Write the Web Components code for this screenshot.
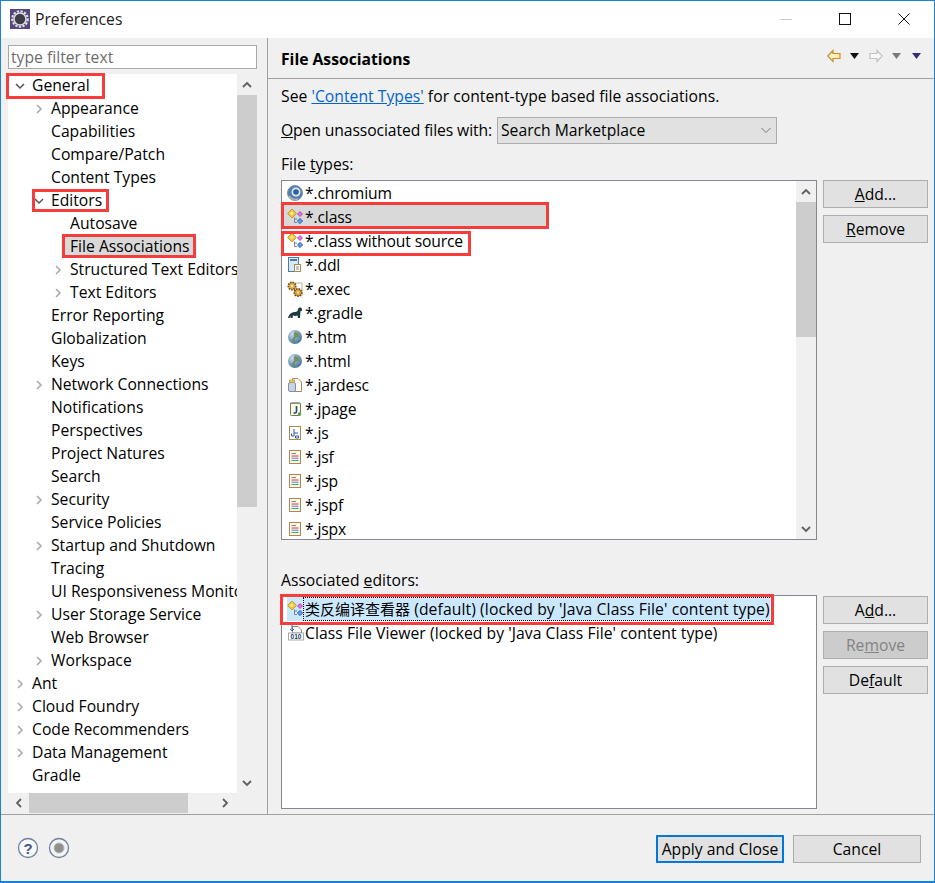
<!DOCTYPE html>
<html><head><meta charset="utf-8"><style>
html,body{margin:0;padding:0;background:#f0f0f0}
body{font:15.7px/20px "Open Sans","Noto Sans CJK SC",sans-serif;color:#000}
</style></head><body>
<pref-window></pref-window>
<script>
const ICONS={
 cls:`<svg viewBox="0 0 18 18" width="18" height="18"><path d="M.6 5.500 5 1.100 9.400 5.500 5 9.900Z" fill="#f4cb3c" stroke="#b58e28" stroke-width=".9"/><path d="M3 5.500 5 3.500 6.500 5 4.500 7Z" fill="#fdf0a8"/><path d="M10.500 6 13 3.500 15.500 6 13 8.500Z" fill="#e46ee4" stroke="#a23ea6" stroke-width=".8"/><path d="M10.300 13 13 10.300 15.700 13 13 15.700Z" fill="#5b9be6" stroke="#2c60a8" stroke-width=".8"/><path d="M7.500 9.500V14.500H10M7.500 11H10" fill="none" stroke="#76849c"/></svg>`,
 chromium:`<svg viewBox="1 0 18 18" width="18" height="18"><circle cx="9" cy="9" r="7.500" fill="#4f7fb5" stroke="#7f8fa8"/><circle cx="10" cy="8" r="4.500" fill="#dce8f5"/><circle cx="10" cy="8" r="2.800" fill="#2f5f9f"/><path d="M3 12a7 7 0 0 0 9 3" stroke="#a8b0b8" stroke-width="2" fill="none"/></svg>`,
 ddl:`<svg viewBox="1 0 18 18" width="18" height="18"><rect x="2.500" y="1.500" width="10" height="14" fill="#dbe8f5" stroke="#4a78a8"/><path d="M4 4H11" stroke="#4a78a8" stroke-width="2"/><rect x="8.500" y="8.500" width="6" height="7" fill="#fff" stroke="#a88a50"/><path d="M10 11H13M10 13H13" stroke="#888"/></svg>`,
 exec:`<svg viewBox="1 0 18 18" width="18" height="18"><rect x="9" y="3" width="7" height="12" fill="#fff" stroke="#b8b0a0"/><circle cx="6" cy="6" r="3.700" fill="#e8b048" stroke="#6a4a18" stroke-width="1.800" stroke-dasharray="1.500 1"/><circle cx="6" cy="6" r="1.100" fill="#fff"/><circle cx="12" cy="12.500" r="3.700" fill="#e8a030" stroke="#6a4a18" stroke-width="1.800" stroke-dasharray="1.500 1"/><circle cx="12" cy="12.500" r="1.100" fill="#fff"/></svg>`,
 gradle:`<svg viewBox="1 0 18 18" width="18" height="18"><path d="M2 14C3 10 6 8 9 8 11 8 12 7 12 5 13 3 15.500 3 16 5 16.500 6.500 15.500 7.500 14.500 7L14 14H12L11.500 11.500C10 12 8 12 7 11.500L6.500 14H4.500L4.500 12 3.500 14Z" fill="#1d3a40"/></svg>`,
 globe:`<svg viewBox="1 0 18 18" width="18" height="18"><defs><radialGradient id="g" cx=".35" cy=".3" r=".8"><stop offset="0" stop-color="#cfe0ee"/><stop offset=".6" stop-color="#6f97b8"/><stop offset="1" stop-color="#3f6a8f"/></radialGradient></defs><circle cx="9" cy="9" r="7" fill="url(#g)"/><path d="M9 3.500C11 5 13.500 6 13.500 8 12 10 10 9 9 10 8 12 10 14 8 15.500 6 13 6 10 8 9 8 7 7 6 9 3.500Z" fill="#6a8a4a" opacity=".85"/></svg>`,
 jar:`<svg viewBox="1 0 18 18" width="18" height="18"><path d="M6.500 2.500H12L15.500 6V15.500H6.500Z" fill="#fff" stroke="#a88a50"/><rect x="2.500" y="6.500" width="7" height="9" rx="1.500" fill="#c8d4e4" stroke="#8090a8"/><rect x="3.500" y="4" width="5" height="2.500" fill="#f0c860" stroke="#a88a50" stroke-width=".6"/></svg>`,
 jpage:`<svg viewBox="1 0 18 18" width="18" height="18"><rect x="4.500" y="3" width="10" height="12.500" rx="1" fill="#fdfbe8" stroke="#7a7a50"/><path d="M5 2.500V4M7 2.500V4M9 2.500V4M11 2.500V4M13 2.500V4" stroke="#666"/><path d="M10.500 6V11.500Q10.500 13 9 13H7.500" stroke="#1a4a78" stroke-width="1.600" fill="none"/><circle cx="13.500" cy="14" r="1.800" fill="#5aa050"/></svg>`,
 js:`<svg viewBox="1 0 18 18" width="18" height="18"><rect x="3.500" y="2.500" width="11" height="13" fill="#fff" stroke="#a88a50"/><path d="M8 5V12H5.500V9.500M8 9H12M9.500 12H12.500V14H9.500Z" stroke="#2c5a9c" fill="none"/></svg>`,
 jsp:`<svg viewBox="1 0 18 18" width="18" height="18"><rect x="3.500" y="2.500" width="11" height="13" fill="#fbf6e8" stroke="#a88a50"/><path d="M5.500 5.500H10" stroke="#888"/><path d="M5.500 8H12.500" stroke="#d04040"/><path d="M5.500 10.200H12.500" stroke="#4a8acb"/><path d="M5.500 12.500H12.500" stroke="#50a060"/></svg>`,
 bin:`<svg viewBox="0 0 18 18" width="18" height="18"><path d="M5.500 2.500H11L14.500 6V9H5.500Z" fill="#fff" stroke="#8a8a8a"/><path d="M5 1V6M3 5 5 7 7 5" fill="none" stroke="#2c6ab0"/><rect x="1.500" y="9" width="15" height="7" fill="#fff" stroke="#aaa"/><text x="9" y="15" font-family="Liberation Sans" font-size="6.500" font-weight="bold" text-anchor="middle" fill="#1a3a68">010</text></svg>`
};
const CHEV=(d,c='#606060',w=1.8)=>`<svg viewBox="0 0 10 10" width="10" height="10"><path d="${d}" fill="none" stroke="${c}" stroke-width="${w}"/></svg>`;
const D={r:'M3 1 7 5 3 9',l:'M7 1 3 5 7 9',u:'M1 7 5 3 9 7',d:'M1 3 5 7 9 3'};

customElements.define('scroll-btn',class extends HTMLElement{
 constructor(){super();const dir=this.getAttribute('dir')||'u';
  this.attachShadow({mode:'open'}).innerHTML=`<style>:host{display:flex;align-items:center;justify-content:center;flex:none;background:#f0f0f0}svg{display:block}</style>${CHEV(D[dir])}`}
});
customElements.define('v-scroll',class extends HTMLElement{
 constructor(){super();
  this.attachShadow({mode:'open'}).innerHTML=`<style>:host{display:flex;flex-direction:column;width:20px;flex:none;background:#f0f0f0;box-sizing:border-box}
  scroll-btn{height:21px}.t{background:#cdcdcd;flex:none;height:var(--thumb)}.s{flex:1}</style>
  <scroll-btn dir="u"></scroll-btn><div class="t"></div><div class="s"></div><scroll-btn dir="d"></scroll-btn>`}
});
customElements.define('tree-row',class extends HTMLElement{
 constructor(){super();
  const l=+this.getAttribute('level')||0,a=this.getAttribute('arrow'),sel=this.hasAttribute('sel');
  const arrow=a?(a=='d'?CHEV(D.d,'#555',1.5):CHEV(D.r,'#aaa',1.6)):'';
  this.attachShadow({mode:'open'}).innerHTML=`<style>:host{display:flex;align-items:center;box-sizing:border-box;height:23px;padding-bottom:2px;white-space:nowrap;padding-left:${7+19*l}px;flex:none}
  .a{width:10px;height:10px;display:flex;flex:none;margin:2px 7px 0 0}
  .x{line-height:22px;${sel?'background:#d9d9d9;margin:0 0 0 -5px;padding:0 3px 0 5px;':''}}</style>
  <span class="a">${arrow}</span><span class="x"><slot></slot></span>`}
});
customElements.define('tree-pane',class extends HTMLElement{
 constructor(){super();
  this.attachShadow({mode:'open'}).innerHTML=`<style>:host{display:grid;grid-template-columns:229px 20px;grid-template-rows:1fr 20px;height:739px;margin-top:5px}
  .v{overflow:hidden;background:#fff;display:flex;flex-direction:column}
  v-scroll{--thumb:412px}
  .h{display:flex;background:#f0f0f0;grid-column:1}.h scroll-btn{width:21px}.h i{display:block;width:159px;background:#cdcdcd}.h b{flex:1}
  .h scroll-btn:last-child{width:24px}
  .c{background:#f0f0f0}</style>
  <div class="v"><slot></slot></div><v-scroll></v-scroll>
  <div class="h"><scroll-btn dir="l"></scroll-btn><i></i><b></b><scroll-btn dir="r"></scroll-btn></div><div class="c"></div>`}
});
customElements.define('eb-button',class extends HTMLElement{
 constructor(){super();
  const c=this.hasAttribute('def'),dis=this.hasAttribute('disabled');
  this.attachShadow({mode:'open'}).innerHTML=`<style>:host{display:flex;align-items:center;justify-content:center;box-sizing:border-box;height:28px;flex:none;
  background:${dis?'#cccccc':'#e1e1e1'};border:${c?'2px solid #0078d7':'1px solid #adadad'};color:${dis?'#838383':'#000'};white-space:nowrap}</style><slot></slot>`}
});
customElements.define('list-row',class extends HTMLElement{
 constructor(){super();
  const ic=this.getAttribute('icon'),sel=this.hasAttribute('sel'),focus=this.hasAttribute('focus');
  this.attachShadow({mode:'open'}).innerHTML=`<style>:host{display:flex;align-items:center;height:24px;flex:none;white-space:nowrap;padding-left:5px;box-sizing:border-box;${sel?'background:linear-gradient(#d9d9d9,#d9d9d9) no-repeat 0 0/267px 100%;':''}${focus?'background:linear-gradient(#cce8ff,#cce8ff) no-repeat 5px 0/483px 100%;':''}}
  svg{flex:none;display:block}.x{${focus?'outline:1px dotted #000;outline-offset:1px;':''}}</style>${ICONS[ic]}<span class="x"><slot></slot></span>`}
});
customElements.define('list-box',class extends HTMLElement{
 constructor(){super();
  this.attachShadow({mode:'open'}).innerHTML=`<style>:host{display:flex;box-sizing:border-box;border:1px solid #828790;background:#fff;overflow:hidden}
  .r{flex:1;min-width:0;display:flex;flex-direction:column;overflow:hidden}</style><div class="r"><slot></slot></div><slot name="bar"></slot>`}
});
customElements.define('tool-bar',class extends HTMLElement{
 constructor(){super();
  const tri=c=>`<svg width="9" height="6" viewBox="0 0 9 6"><path d="M0 0H9L4.500 6Z" fill="${c}"/></svg>`;
  this.attachShadow({mode:'open'}).innerHTML=`<style>:host{display:flex;align-items:center;margin-bottom:5px}svg{display:block}</style>
  <svg width="14" height="14" viewBox="0 0 14 14" style="margin-right:9px"><defs><linearGradient id="a" x1="0" x2="1"><stop offset="0" stop-color="#fffbe0"/><stop offset="1" stop-color="#fde9a0"/></linearGradient></defs><path d="M.8 7 6 1.500V4.500H13V9.500H6V12.500Z" fill="url(#a)" stroke="#c8902c" stroke-width="1.200"/></svg>${tri('#111')}
  <svg width="14" height="14" viewBox="0 0 14 14" style="margin:0 9px 0 10px"><path d="M13.200 7 8 1.500V4.500H1V9.500H8V12.500Z" fill="#f8f8f8" stroke="#c4c4c4" stroke-width="1.200"/></svg>${tri('#7a7a7a')}
  <span style="width:11px"></span>${tri('#3c2a78')}`}
});
customElements.define('title-bar',class extends HTMLElement{
 constructor(){super();
  this.attachShadow({mode:'open'}).innerHTML=`<style>:host{display:flex;align-items:center;height:37px;box-sizing:border-box;padding:0 1px 1px 9px;background:#fff;flex:none}
  .n{margin-left:5px;color:#222;flex:1}
  .b{display:flex}.b span{width:59px;display:flex;align-items:center;justify-content:center}svg{display:block}</style>
  <svg width="20" height="20" viewBox="0 0 20 20"><rect width="20" height="20" fill="#54467f"/><circle cx="10" cy="10" r="7.800" fill="none" stroke="#e4e4e4" stroke-width="2" stroke-dasharray="2.300 1.400"/><circle cx="10" cy="10" r="6" fill="#3c3c48" stroke="#dcdcdc" stroke-width="1.600"/></svg>
  <span class="n"><slot></slot></span>
  <div class="b"><span><svg width="12" height="12" viewBox="0 0 12 12"><path d="M0 6.500H12" stroke="#ccc"/></svg></span>
  <span><svg width="12" height="12" viewBox="0 0 12 12"><rect x=".5" y=".5" width="11" height="11" fill="none" stroke="#111"/></svg></span>
  <span><svg width="12" height="12" viewBox="0 0 12 12"><path d="M.5 .5 11.500 11.500M11.500 .5 .5 11.500" stroke="#111"/></svg></span></div>`}
});
customElements.define('red-mark',class extends HTMLElement{
 constructor(){super();
  const [x,y,w,h]=this.getAttribute('box').split(',');
  this.attachShadow({mode:'open'}).innerHTML=`<style>:host{position:absolute;left:${x}px;top:${y}px;width:${w}px;height:${h}px;box-sizing:border-box;border:3px solid #f73c3c;pointer-events:none}</style>`}
});

const tree=[['General',0,'d'],['Appearance',1,'r'],['Capabilities',1],['Compare/Patch',1],['Content Types',1],['Editors',1,'d'],['Autosave',2],['File Associations',2,'',1],['Structured Text Editors',2,'r'],['Text Editors',2,'r'],['Error Reporting',1],['Globalization',1],['Keys',1],['Network Connections',1,'r'],['Notifications',1],['Perspectives',1],['Project Natures',1],['Search',1],['Security',1,'r'],['Service Policies',1],['Startup and Shutdown',1,'r'],['Tracing',1],['UI Responsiveness Monitoring',1],['User Storage Service',1,'r'],['Web Browser',1],['Workspace',1,'r'],['Ant',0,'r'],['Cloud Foundry',0,'r'],['Code Recommenders',0,'r'],['Data Management',0,'r'],['Gradle',0],['Help',0,'r']];
const treeH=tree.map(([t,l,a,s])=>`<tree-row level="${l}" ${a?`arrow="${a}"`:''} ${s?'sel':''} ${t=='Help'?'style="margin-top:1px"':''}>${t}</tree-row>`).join('');
const files=[['chromium','*.chromium'],['cls','*.class',1],['cls','*.class without source'],['ddl','*.ddl'],['exec','*.exec'],['gradle','*.gradle'],['globe','*.htm'],['globe','*.html'],['jar','*.jardesc'],['jpage','*.jpage'],['js','*.js'],['jsp','*.jsf'],['jsp','*.jsp'],['jsp','*.jspf'],['jsp','*.jspx']];
const filesH=files.map(([i,t,s])=>`<list-row icon="${i}" ${s?'sel':''} style="letter-spacing:-.15px">${t}</list-row>`).join('');
const helpI=`<svg width="22" height="22" viewBox="0 0 22 22"><circle cx="11" cy="11" r="9.500" fill="#f8f9fb" stroke="#6f7f9f" stroke-width="1.300"/><text x="11" y="16.500" text-anchor="middle" font-family="Liberation Sans" font-weight="bold" font-size="15" fill="#44557f">?</text></svg>`;
const recI=`<svg width="22" height="22" viewBox="0 0 22 22"><circle cx="11" cy="11" r="9.500" fill="#f4f4f4" stroke="#6f7f9f" stroke-width="1.300"/><circle cx="11" cy="11" r="5" fill="#8f8f8f" stroke="#bbb"/></svg>`;

customElements.define('pref-window',class extends HTMLElement{
 constructor(){super();
  this.attachShadow({mode:'open'}).innerHTML=`<style>
  :host{display:flex;flex-direction:column;position:relative;box-sizing:border-box;width:935px;height:883px;border:1px solid #1883d7;border-bottom-width:2px;background:#f0f0f0;overflow:hidden}
  .main{display:flex;height:776px;flex:none}
  .left{width:267px;flex:none;box-sizing:border-box;padding:7px 0 0 7px;border-right:1px solid #a0a0a0}
  .filter{box-sizing:border-box;width:249px;height:24px;border:1px solid #a9a9a9;background:#fff;color:#6d6d6d;display:flex;align-items:center;padding-left:2px}
  .right{flex:1;min-width:0;display:flex;flex-direction:column}
  .head{height:41px;flex:none;box-sizing:border-box;border-bottom:1px solid #a0a0a0;display:flex;align-items:center;justify-content:space-between;padding:1px 13px 0 13px;font-weight:700}
  .body{padding:7px 6px 0 13px;display:flex;flex-direction:column;flex:1}
  a{color:#0066cc}
  .combo-row{display:flex;align-items:flex-start;margin-top:11px;height:27px}
  .combo-row>span{letter-spacing:-.1px;margin-top:3px}
  .combo{margin-left:auto;margin-right:151px;box-sizing:border-box;width:280px;height:27px;background:#e1e1e1;border:1px solid #adadad;display:flex;align-items:center;justify-content:space-between;padding:0 5px 2px 3px}
  .lab{height:20px;margin-top:10px}
  .grp{display:flex;gap:6px;margin-top:6px}
  .col{display:flex;flex-direction:column;gap:7px;width:105px;flex:none}
  list-box{width:536px}
  .foot{flex:1;border-top:1px solid #a0a0a0;display:flex;align-items:flex-start;padding:20px 13px 0 16px}
  .foot .ic{display:flex;gap:9px;margin-top:2px}
  .foot .bt{margin-left:auto;display:flex;gap:9px}
  .foot eb-button{width:128px}
  .zh{font-size:15px;letter-spacing:0}
  </style>
  <title-bar>Preferences</title-bar>
  <div class="main">
   <div class="left"><div class="filter">type filter text</div><tree-pane>${treeH}</tree-pane></div>
   <div class="right">
    <div class="head"><span>File Associations</span><tool-bar></tool-bar></div>
    <div class="body">
     <div style="height:20px;letter-spacing:.03px">See <a href="#">'Content Types'</a> for content-type based file associations.</div>
     <div class="combo-row"><span><u>O</u>pen unassociated files with:</span><div class="combo"><span>Search Marketplace</span><svg width="10" height="10" viewBox="0 0 10 10"><path d="M.5 3 5 7.500 9.500 3" fill="none" stroke="#777"/></svg></div></div>
     <div class="lab">File <u>t</u>ypes:</div>
     <div class="grp"><list-box style="height:360px">${filesH}<v-scroll slot="bar" style="--thumb:135px"></v-scroll></list-box>
       <div class="col"><eb-button><span><u>A</u>dd...</span></eb-button><eb-button><span><u>R</u>emove</span></eb-button></div></div>
     <div class="lab" style="margin-top:30px">Associated <u>e</u>ditors:</div>
     <div class="grp" style="margin-top:5px"><list-box style="height:214px"><list-row icon="cls" focus style="margin-top:1px;letter-spacing:.1px"><span class="zh">类反编译查看器</span> (default) (locked by 'Java Class File' content type)</list-row><list-row icon="bin" style="letter-spacing:.05px">Class File Viewer (locked by 'Java Class File' content type)</list-row></list-box>
       <div class="col" style="margin-top:1px"><eb-button><span>A<u>d</u>d...</span></eb-button><eb-button disabled><span>Re<u>m</u>ove</span></eb-button><eb-button><span>De<u>f</u>ault</span></eb-button></div></div>
    </div>
   </div>
  </div>
  <div class="foot"><div class="ic">${helpI}${recI}</div><div class="bt"><eb-button def>Apply and Close</eb-button><eb-button>Cancel</eb-button></div></div>
  <red-mark box="5,72,99,26"></red-mark><red-mark box="31,188,77,23"></red-mark><red-mark box="61,233,134,24"></red-mark>
  <red-mark box="280,201,268,27"></red-mark><red-mark box="280,230,190,25"></red-mark><red-mark box="279,593,494,31"></red-mark>`}
});
</script></body></html>
